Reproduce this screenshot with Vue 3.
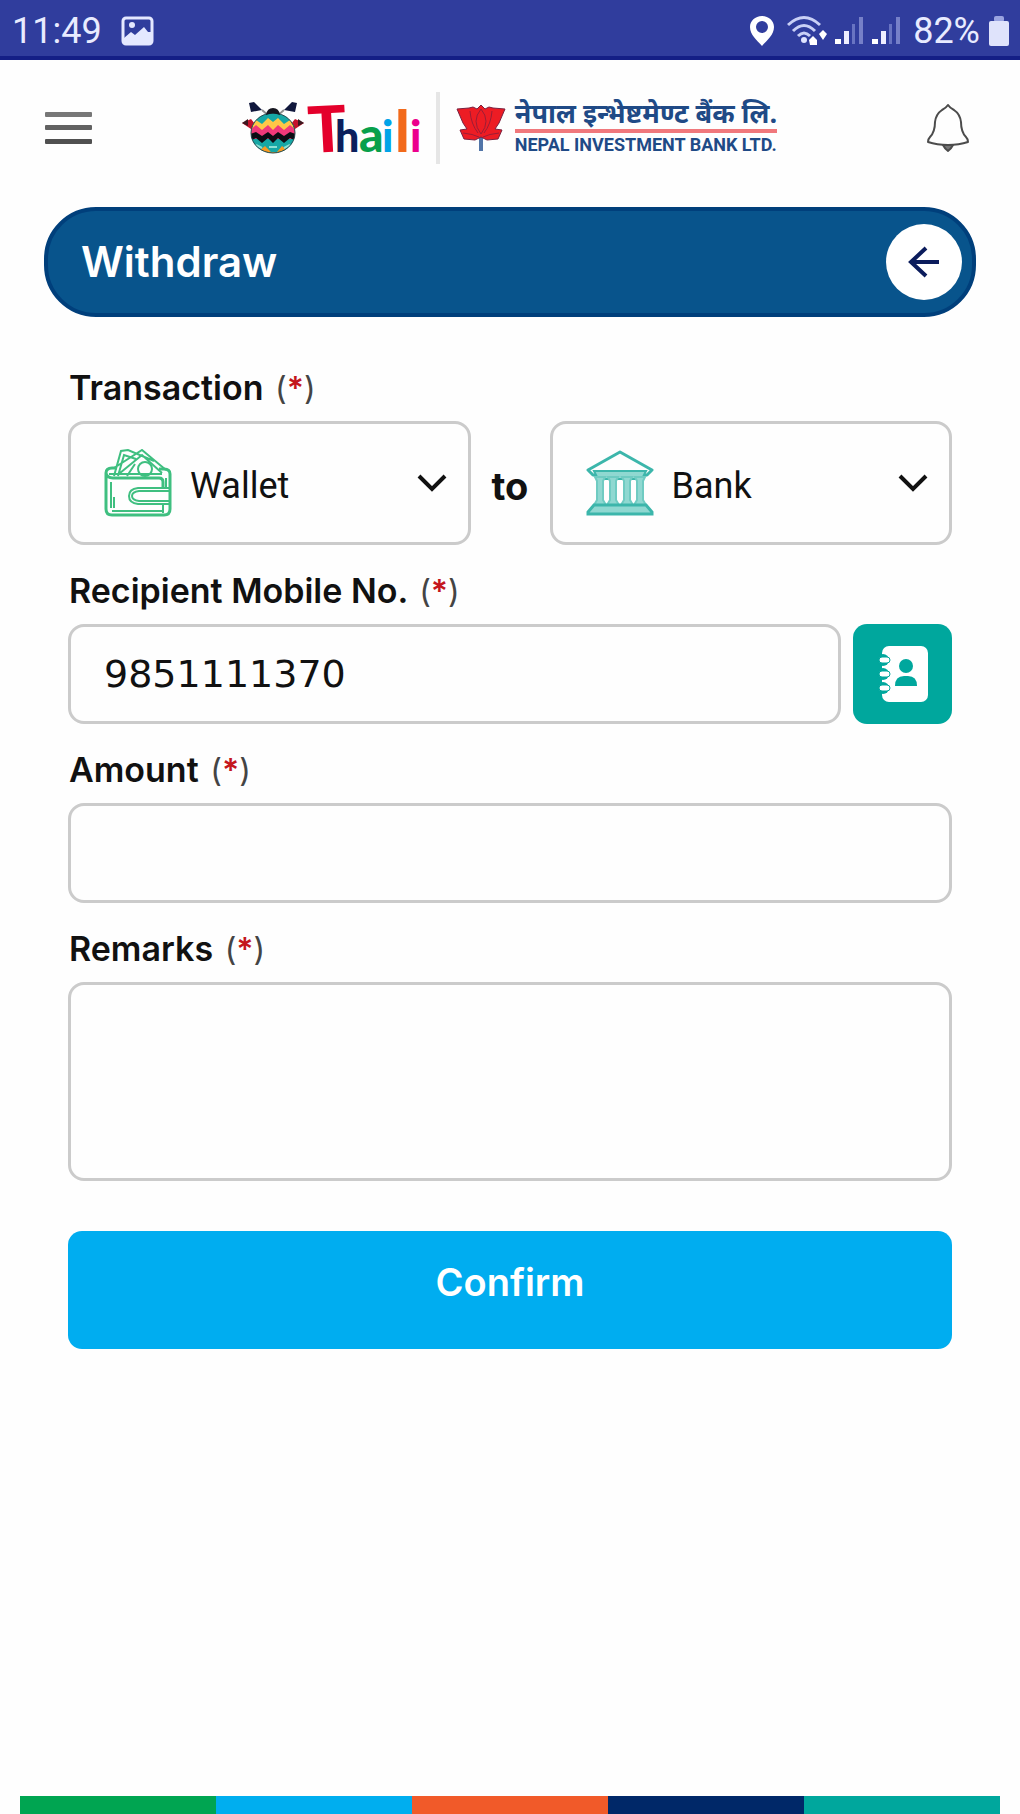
<script setup>
import { ref } from 'vue'

const accounts = ['Wallet', 'Bank']
const from = ref('Wallet')
const to = ref('Bank')
const mobile = ref('9851111370')
const amount = ref('')
const remarks = ref('')

const signals = [1, 2]
const stripes = ['#00a551', '#00aeef', '#f15a29', '#002868', '#00a79d']
</script>

<template>
  <div class="screen">
    <div class="status-bar">
      <div class="status-group">
        <span>11:49</span>
        <svg class="status-image" width="34" height="30" viewBox="0 0 34 30" aria-hidden="true">
          <rect x="2" y="2" width="29" height="26" rx="3" fill="none" stroke="#e4e8ff" stroke-width="3" />
          <circle cx="11" cy="9" r="3" fill="#e4e8ff" />
          <path d="M3 22 L10 16 L14 19 L23 11 L27 16 L31 16 V28 H3 Z" fill="#e4e8ff" />
        </svg>
      </div>
      <div class="status-group status-right">
        <svg width="26" height="32" viewBox="0 0 26 32" aria-hidden="true">
          <path d="M13 1 C6 1 1 6 1 12 C1 20 8 25 13 31 C18 25 25 20 25 12 C25 6 20 1 13 1 Z M13 6 A6 6 0 1 1 13 18 A6 6 0 1 1 13 6 Z" fill="#fff" fill-rule="evenodd" />
        </svg>
        <svg class="wifi" width="40" height="32" viewBox="0 0 40 32" aria-hidden="true">
          <g fill="none" stroke="#c9d0f6" stroke-width="3">
            <path d="M1 10 Q17 -5 33 10" />
            <path d="M6 16 Q17 5 28 16" />
            <path d="M11 21 Q17 15 23 21" />
          </g>
          <circle cx="17" cy="25" r="3" fill="#dfe4ff" />
          <path d="M22 25 L26 21 L30 25 V30 H23 Z M32 19 L36 15 L40 19 L36 25 Z" fill="#fff" />
        </svg>
        <svg v-for="signal in signals" :key="signal" class="signal" width="29" height="28" viewBox="0 0 29 28" aria-hidden="true">
          <rect x="0" y="22" width="6" height="5" fill="#fff" />
          <rect x="9" y="14" width="5" height="13" fill="#eef" />
          <rect x="17" y="7" width="3" height="20" fill="#6874c2" />
          <rect x="24" y="0" width="4" height="27" fill="#7680c8" />
        </svg>
        <span class="battery-level">82%</span>
        <svg width="22" height="32" viewBox="0 0 22 32" aria-hidden="true">
          <rect x="6" y="1" width="10" height="6" rx="2" fill="#9aa4e0" />
          <rect x="1" y="6" width="20" height="25" rx="2" fill="#dfe3fb" />
        </svg>
      </div>
    </div>

    <header class="header">
      <button class="icon-button" type="button" aria-label="Menu">
        <svg width="47" height="34" viewBox="0 0 47 34">
          <rect y="1" width="47" height="5" rx="1" fill="#777" />
          <rect y="14" width="47" height="5" rx="1" fill="#626262" />
          <rect y="28" width="47" height="5" rx="1" fill="#505050" />
        </svg>
      </button>

      <div class="brands">
        <svg class="thaili" width="184" height="84" viewBox="0 -16 184 84" aria-label="Thaili">
          <defs>
            <clipPath id="pouch"><ellipse cx="31" cy="31" rx="22" ry="20" /></clipPath>
          </defs>
          <path d="M7 1 L12 0 L20 8 L9 10 Z M55 1 L50 0 L42 8 L53 10 Z" fill="#10173c" />
          <path d="M20 8 L27 14 M42 8 L35 14" stroke="#8f8f8f" stroke-width="2" />
          <path d="M0 21 L9 17 L13 22 L9 27 Z M62 21 L53 17 L49 22 L53 27 Z" fill="#c5122b" />
          <path d="M0 21 L6 17 L6 24 Z M62 21 L56 17 L56 24 Z" fill="#3c1820" />
          <g clip-path="url(#pouch)">
            <rect x="8" y="8" width="46" height="44" fill="#16a7a5" />
            <path d="M8 24 L14 18 L20 22 L26 16 L31 20 L36 16 L42 22 L48 18 L54 24 V34 H8 Z" fill="#ffc747" />
            <path d="M8 28 L14 23 L20 28 L26 23 L31 28 L36 23 L42 28 L48 23 L54 28 V37 H8 Z" fill="#f0387a" />
            <path d="M8 32 L14 30 L20 34 L26 30 L31 34 L36 30 L42 34 L48 30 L54 32 V39 L48 36 L42 41 L36 36 L31 41 L26 36 L20 41 L14 36 L8 39 Z" fill="#0c0c14" />
            <path d="M17 49 L23 44 L29 50 L35 50 L40 44 L46 49 V53 H17 Z" fill="#f79a22" />
            <path d="M14 43 L20 46 M48 43 L42 46 M27 45 H35" stroke="#8be0d4" stroke-width="2" />
          </g>
          <ellipse cx="31" cy="31" rx="22" ry="20" fill="none" stroke="#234a50" stroke-width="1" />
          <path d="M24 13 Q25 6 31 6 Q37 6 38 13 Q31 10 24 13 Z" fill="#15151f" />
          <g class="thaili-name">
            <text x="66" y="50" font-size="64" fill="#e4002b" transform="rotate(-3 84 30)">T</text>
            <text x="93" y="50" font-size="43" fill="#0b1f5c">h</text>
            <text x="117" y="50" font-size="48" fill="#08a04b">a</text>
            <text x="140" y="50" font-size="44" fill="#00a3e8">i</text>
            <text x="153" y="50" font-size="58" fill="#f26a1b">l</text>
            <text x="168" y="50" font-size="44" fill="#ec008c">i</text>
          </g>
        </svg>
        <span class="brand-divider"></span>
        <svg class="lotus" width="50" height="48" viewBox="0 0 50 48" aria-hidden="true">
          <path d="M25 32 V47" stroke="#5275a8" stroke-width="4" />
          <path d="M1 5 L13 4 L17 3 L21 5 L25 1 L29 5 L33 3 L37 4 L49 5 L43 19 L39 25 L46 26 L42 35 L31 36 L25 33 L19 36 L8 35 L4 26 L11 25 L7 19 Z" fill="#ed1c24" stroke="#7a2140" stroke-width="1" />
          <path d="M25 5 Q15 17 25 30 Q35 17 25 5 Z M14 7 Q15 20 22 29 M36 7 Q35 20 28 29 M7 29 Q17 30 23 33 M43 29 Q33 30 27 33" fill="none" stroke="#9c1d36" stroke-width="1" />
        </svg>
        <div class="bank-name">
          <span class="bank-nepali" lang="ne">नेपाल इन्भेष्टमेण्ट बैंक लि.</span>
          <span class="bank-rule"></span>
          <span class="bank-english">NEPAL INVESTMENT BANK LTD.</span>
        </div>
      </div>

      <button class="icon-button" type="button" aria-label="Notifications">
        <svg width="42" height="48" viewBox="0 0 42 48" fill="none" stroke="#4c4c4c" stroke-width="2" stroke-linejoin="round">
          <path d="M21 1 Q19 4 15 6 Q9 10 8 18 Q8 28 3 33 Q1 35 1 38 Q10 41 21 41 Q32 41 41 38 Q41 35 39 33 Q34 28 34 18 Q33 10 27 6 Q23 4 21 1 Z" />
          <path d="M16 41 Q18 45 21 47 Q24 45 26 41 Z" fill="#777" />
        </svg>
      </button>
    </header>

    <div class="title-bar">
      <h1>Withdraw</h1>
      <button class="back" type="button" aria-label="Back">
        <svg width="32" height="32" viewBox="0 0 32 32" fill="none" stroke="#0b1c5c" stroke-width="4">
          <path d="M31 16 H3 M18 2 L3 16 L18 30" />
        </svg>
      </button>
    </div>

    <form class="form" @submit.prevent>
      <div class="field">
        <label for="from">Transaction <span class="required">(<b>*</b>)</span></label>
        <div class="transfer">
          <div class="picker">
            <select id="from" v-model="from">
              <option v-for="account in accounts" :key="account">{{ account }}</option>
            </select>
            <svg class="account-icon" width="68" height="68" viewBox="0 0 68 68" fill="none" stroke="#3fbf80" stroke-width="2" aria-hidden="true">
              <path d="M2 24 Q2 19 8 19 H13 M2 24 V60 Q2 66 8 66 H60 Q66 66 66 60 V25 Q66 20 60 20 H55 M2 24 Q3 29 9 29 H55 Q59 29 59 33 V39" stroke-width="3" />
              <path d="M66 39 H34 Q25 40 25 47 Q25 54 34 55 H66 M66 42 H35 Q28 43 28 47 Q28 51 35 52 H66" />
              <path d="M10 27 L17 2 L24 1 L50 12 M14 27 L20 6 L32 10 M10 19 L38 1 L62 21 M16 24 L38 6 L58 24 M23 27 L31 15 M5 25 H58" />
              <circle cx="41" cy="20" r="7" />
              <path d="M7 33 V59 M10 48 V59 M59 55 V64 M62 29 V38 M8 62 H58" />
            </svg>
            <svg class="chevron" width="30" height="18" viewBox="0 0 30 18" aria-hidden="true">
              <path d="M2 2 L15 15 L28 2" fill="none" stroke="#111" stroke-width="4" />
            </svg>
          </div>
          <span class="to">to</span>
          <div class="picker">
            <select id="to" v-model="to" aria-label="Transfer to">
              <option v-for="account in accounts" :key="account">{{ account }}</option>
            </select>
            <svg class="account-icon" width="68" height="68" viewBox="0 0 68 68" fill="none" stroke="#3cb6ab" stroke-width="2" aria-hidden="true">
              <path d="M2 21 L34 3 L66 21 L61 26 H7 Z" stroke-width="3" stroke-linejoin="round" />
              <path d="M8 22 H60 L56 30 H12 Z" fill="#8fd8d1" />
              <g fill="#8fd8d1" stroke="#6fcbc2">
                <path d="M9 28 H19 L17 32 V51 L20 56 H8 L11 51 V32 Z" />
                <path d="M22 28 H32 L30 32 V51 L33 56 H21 L24 51 V32 Z" />
                <path d="M36 28 H46 L44 32 V51 L47 56 H35 L38 51 V32 Z" />
                <path d="M49 28 H59 L57 32 V51 L60 56 H48 L51 51 V32 Z" />
              </g>
              <path d="M8 56 H60 L66 63 V65 H2 V63 Z" fill="#8fd8d1" stroke-width="3" />
            </svg>
            <svg class="chevron" width="30" height="18" viewBox="0 0 30 18" aria-hidden="true">
              <path d="M2 2 L15 15 L28 2" fill="none" stroke="#111" stroke-width="4" />
            </svg>
          </div>
        </div>
      </div>

      <div class="field">
        <label for="mobile">Recipient Mobile No. <span class="required">(<b>*</b>)</span></label>
        <div class="mobile">
          <input id="mobile" v-model="mobile" type="tel" />
          <button class="contacts" type="button" aria-label="Choose from contacts">
            <svg width="52" height="58" viewBox="0 0 52 58" aria-hidden="true">
              <rect x="5" y="1" width="46" height="56" rx="7" fill="#fff" />
              <circle cx="29" cy="21" r="7" fill="#00a79d" />
              <path d="M18 41 Q18 31 27 31 H31 Q40 31 40 41 Z" fill="#00a79d" />
              <g v-for="y in [15, 29, 43]" :key="y">
                <circle cx="6" :cy="y" r="6" fill="#00a79d" />
                <rect x="2" :y="y - 3" width="11" height="6" rx="3" fill="#fff" stroke="#00a79d" stroke-width="1" />
              </g>
            </svg>
          </button>
        </div>
      </div>

      <div class="field">
        <label for="amount">Amount <span class="required">(<b>*</b>)</span></label>
        <input id="amount" v-model="amount" type="text" inputmode="decimal" />
      </div>

      <div class="field">
        <label for="remarks">Remarks <span class="required">(<b>*</b>)</span></label>
        <textarea id="remarks" v-model="remarks"></textarea>
      </div>

      <button class="confirm" type="submit">Confirm</button>
    </form>

    <footer class="stripes">
      <span v-for="color in stripes" :key="color" :style="{ background: color }"></span>
    </footer>
  </div>
</template>

<style>
body { margin: 0; background: #fefefe; }
</style>

<style scoped>
.screen { display: flex; flex-direction: column; min-height: 100vh; color: #111; background: #fefefe; font-family: Inter, "Liberation Sans", sans-serif; }
button, input, select, textarea { box-sizing: border-box; margin: 0; font: inherit; color: inherit; }
button { padding: 0; border: 0; cursor: pointer; }
svg { display: block; flex: none; }

.status-bar { box-sizing: border-box; display: flex; justify-content: space-between; height: 60px; padding: 0 10px 0 12px; color: #e8ebff; background: #303d9d; border-bottom: 4px solid #141f86; font-family: Roboto, sans-serif; font-size: 36px; }
.status-group { display: flex; align-items: center; gap: 19px; padding-top: 5px; }
.status-right { gap: 8px; }
.wifi { margin-left: 4px; }
.battery-level { margin-left: 4px; }

.header { display: flex; align-items: center; justify-content: space-between; height: 136px; padding: 0 51px 11px 45px; }
.icon-button { background: none; }
.brands { display: flex; align-items: center; }
.thaili-name { font-family: Lato, sans-serif; font-weight: 900; }
.brand-divider { width: 4px; height: 72px; margin: 0 16px 0 10px; background: #e6e6e6; }
.bank-name { display: flex; flex-direction: column; margin-left: 9px; color: #1f4a86; white-space: nowrap; }
.bank-nepali { padding-top: 6px; font-family: "Noto Sans Devanagari", "Noto Sans", sans-serif; font-size: 27px; font-weight: 700; line-height: 24px; }
.bank-rule { height: 4px; background: #f0787c; }
.bank-english { font-family: Roboto, sans-serif; font-size: 18px; font-weight: 700; line-height: 24px; }

.title-bar { box-sizing: border-box; display: flex; align-items: center; justify-content: space-between; height: 110px; margin: 0 44px; padding: 0 10px 0 33px; color: #fff; background: #08548c; border: 4px solid #003f7b; border-radius: 52px; }
.title-bar h1 { margin: 0; font-size: 42px; font-weight: 600; line-height: 52px; }
.back { display: grid; place-items: center; width: 76px; height: 76px; background: #fff; border-radius: 50%; }

.form { display: flex; flex-direction: column; gap: 25px; padding: 50px 68px; }
.field { display: flex; flex-direction: column; gap: 12px; }
.field label { padding-left: 1px; font-size: 34px; font-weight: 600; line-height: 42px; }
.required { margin-left: 3px; color: #444; font-size: 32px; font-weight: 400; line-height: 32px; }
.required b { color: #c4161c; font-weight: 600; }
input, select, textarea { width: 100%; height: 100px; padding: 0 33px; background: #fefefe; border: 3px solid #cbcbcb; border-radius: 16px; outline: none; font-family: "DejaVu Sans", sans-serif; font-size: 38px; }
textarea { display: block; height: 199px; padding: 24px 33px; resize: none; }

.transfer { display: grid; grid-template-columns: 1fr 79px 1fr; align-items: center; }
.to { padding-top: 6px; text-align: center; font-size: 38px; font-weight: 700; }
.picker { display: grid; align-items: center; }
.picker > * { grid-area: 1 / 1; }
.picker select { height: 124px; padding: 6px 60px 0 119px; appearance: none; font-family: Roboto, sans-serif; font-size: 36px; }
.account-icon { margin-left: 36px; pointer-events: none; }
.chevron { justify-self: end; margin-right: 24px; pointer-events: none; }
.mobile { display: flex; gap: 12px; }
.mobile input { flex: 1; min-width: 0; }
.contacts { display: grid; place-items: center; flex: none; width: 99px; height: 100px; background: #00a79d; border-radius: 14px; }
.confirm { height: 118px; margin-top: 25px; padding-bottom: 16px; color: #fff; background: #00adf0; border-radius: 14px; font-size: 38px; font-weight: 600; }

.stripes { display: flex; height: 18px; margin: auto 20px 0; }
.stripes span { flex: 1; }
</style>
